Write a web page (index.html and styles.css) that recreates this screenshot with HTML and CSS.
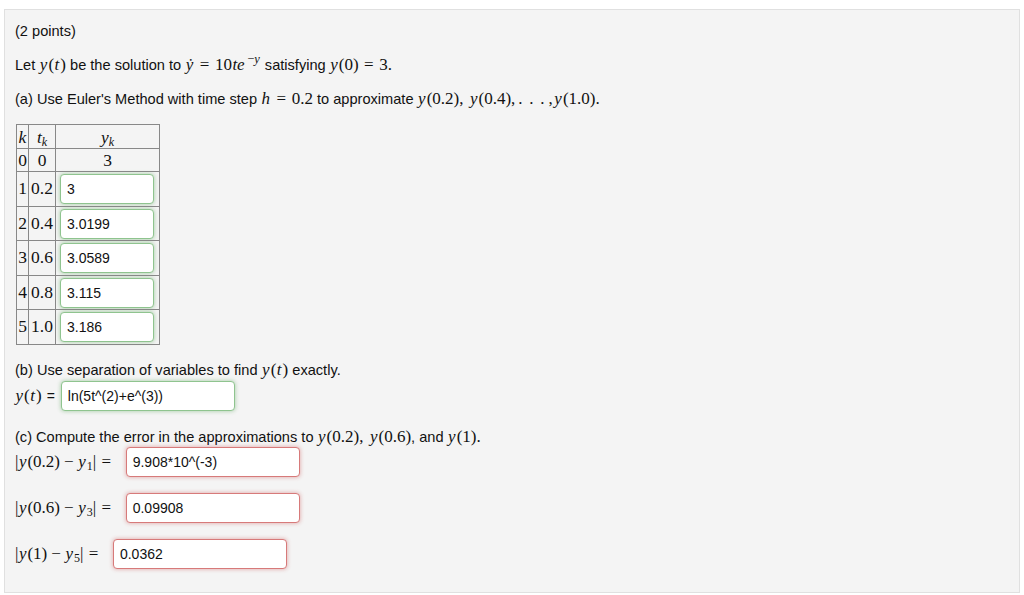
FILE: index.html
```html
<!DOCTYPE html>
<html>
<head>
<meta charset="utf-8">
<link rel="stylesheet" href="styles.css">
</head>
<body>
<div class="panel">
  <p class="line first">(2 points)</p>
  <p class="line">Let <span class="m"><i>y</i>(<i>t</i>)</span> be the solution to <span class="m"><i>ẏ</i><span class="rel">=</span>10<i>te</i><sup>−<i>y</i></sup></span> satisfying <span class="m"><i>y</i>(0)<span class="rel">=</span>3.</span></p>
  <p class="line">(a) Use Euler's Method with time step <span class="m"><i>h</i><span class="rel">=</span>0.2</span> to approximate <span class="m"><i>y</i>(0.2),<span class="gap"></span><i>y</i>(0.4),<span class="dots">. . .</span>,<span class="gap2"></span><i>y</i>(1.0).</span></p>

  <table class="euler">
    <tr class="hdr"><td class="ck"><i>k</i></td><td class="ct"><i>t<sub>k</sub></i></td><td class="cy"><i>y<sub>k</sub></i></td></tr>
    <tr class="r0"><td>0</td><td>0</td><td>3</td></tr>
    <tr><td>1</td><td>0.2</td><td class="cin"><div class="inp ok">3</div></td></tr>
    <tr><td>2</td><td>0.4</td><td class="cin"><div class="inp ok">3.0199</div></td></tr>
    <tr><td>3</td><td>0.6</td><td class="cin"><div class="inp ok">3.0589</div></td></tr>
    <tr><td>4</td><td>0.8</td><td class="cin"><div class="inp ok">3.115</div></td></tr>
    <tr><td>5</td><td>1.0</td><td class="cin"><div class="inp ok">3.186</div></td></tr>
  </table>

  <p class="line pb">(b) Use separation of variables to find <span class="m"><i>y</i>(<i>t</i>)</span> exactly.</p>
  <div class="row rb"><span class="m"><i>y</i>(<i>t</i>)</span><span class="eq">=</span><div class="inp ok wide">ln(5t^(2)+e^(3))</div></div>

  <p class="line pc">(c) Compute the error in the approximations to <span class="m"><i>y</i>(0.2),<span class="gap"></span><i>y</i>(0.6)</span>, and <span class="m"><i>y</i>(1).</span></p>
  <div class="row rc1"><span class="m lab">|<i>y</i>(0.2)<span class="bin">−</span><i>y</i><sub>1</sub>|<span class="rel">=</span></span><div class="inp bad wide">9.908*10^(-3)</div></div>
  <div class="row rc"><span class="m lab">|<i>y</i>(0.6)<span class="bin">−</span><i>y</i><sub>3</sub>|<span class="rel">=</span></span><div class="inp bad wide">0.09908</div></div>
  <div class="row rc"><span class="m lab">|<i>y</i>(1)<span class="bin">−</span><i>y</i><sub>5</sub>|<span class="rel">=</span></span><div class="inp bad wide">0.0362</div></div>
</div>
</body>
</html>
```

FILE: styles.css
```css
html, body {
  margin: 0;
  padding: 0;
  background: #ffffff;
}
body {
  font-family: "Liberation Sans", Arial, sans-serif;
  font-size: 14px;
  color: #111;
}
.panel {
  margin: 9px 0 0 4px;
  width: 1004px;
  height: 582px;
  background: #f4f4f4;
  border: 1px solid #e0e0e0;
  padding: 0 0 0 10px;
  box-sizing: content-box;
}
.line {
  margin: 0;
  height: 20px;
  line-height: 20px;
  font-size: 14.6px;
  white-space: nowrap;
}
.first { margin-top: 11px; }
.line + .line { margin-top: 14px; }
.m {
  font-family: "Liberation Serif", "Times New Roman", serif;
  font-size: 17px;
}
.m i, .euler i { font-style: italic; }
.m i { padding: 0 1px 0 0.5px; }
.m sup i, .m sub i { padding: 0; }
.rel { margin: 0 5.5px; }
.bin { margin: 0 4px; }
.gap { display: inline-block; width: 6px; }
.gap2 { display: inline-block; width: 1px; }
.dots { letter-spacing: 1.2px; margin: 0 3px 0 3px; }
sup {
  font-size: 12.5px;
  vertical-align: 7px;
  line-height: 0;
  padding: 0 1px 0 1.5px;
}
sub {
  font-size: 12px;
  vertical-align: -3px;
  line-height: 0;
}
.euler {
  margin: 15px 0 0 1px;
  border-collapse: collapse;
  border: 1px solid #555;
  font-family: "Liberation Serif", "Times New Roman", serif;
  font-size: 17.5px;
  table-layout: fixed;
  width: 144px;
}
.euler td {
  border: 1px solid #888;
  padding: 0;
  text-align: center;
  white-space: nowrap;
  overflow: visible;
}
.euler .hdr td { height: 23px; line-height: 18px; }
.euler .r0 td { height: 22px; line-height: 18px; }
.euler td.ck { width: 11px; }
.euler td.ct { width: 26px; }
.euler td.cin { padding: 2px 4px 1.5px 4px; }
.inp {
  box-sizing: border-box;
  height: 30px;
  line-height: 28px;
  background: #fff;
  border-radius: 4px;
  padding-left: 6px;
  text-align: left;
  font-family: "Liberation Sans", Arial, sans-serif;
  font-size: 14px;
  color: #111;
  white-space: nowrap;
}
.euler .inp { width: 94px; }
.ok {
  border: 1px solid #8fc48f;
  box-shadow: 0 0 4px rgba(60, 150, 60, 0.45);
}
.bad {
  border: 1px solid #d77a7a;
  box-shadow: 0 0 4px rgba(200, 60, 60, 0.45);
}
.wide { width: 174px; }
.pb { margin-top: 15px; }
.row {
  display: flex;
  align-items: center;
  height: 30px;
  white-space: nowrap;
}
.rb { margin-top: 1px; }
.rb .eq { font-size: 14px; margin: 0 6px 0 5px; }
.pc { margin-top: 16px; }
.rc1 { margin-top: 0px; }
.rc { margin-top: 16px; }
.lab { margin-right: 9px; }
```
